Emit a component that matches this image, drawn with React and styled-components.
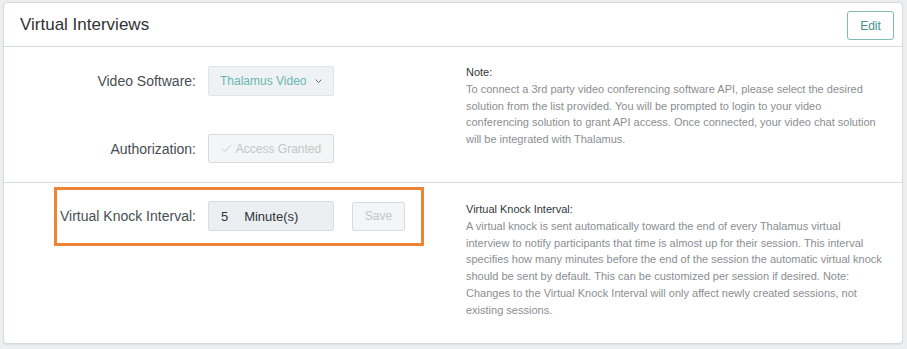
import React from "react";
import styled, { createGlobalStyle } from "styled-components";

const Global = createGlobalStyle`
  html, body { margin: 0; padding: 0; background: #eceef0; }
  body { font-family: "Liberation Sans", Arial, sans-serif; }
  * { box-sizing: border-box; }
`;

const Page = styled.div`
  padding: 2px 4px 5px 3px;
`;

const Card = styled.section`
  background: #fff;
  border: 1px solid #d6d9dc;
  border-radius: 4px;
  height: 342px;
  box-shadow: 0 1px 1px rgba(0,0,0,0.06);
  overflow: hidden;
`;

const Header = styled.header`
  height: 44px;
  display: flex;
  align-items: center;
  justify-content: space-between;
  padding: 0 8px 0 16px;
  border-bottom: 1px solid #d9dcdf;
`;

const Title = styled.h2`
  margin: 0;
  font-size: 17px;
  font-weight: 400;
  color: #2f3336;
`;

const EditButton = styled.button`
  width: 47px;
  height: 29px;
  margin-top: 2px;
  background: #fff;
  border: 1px solid #7fbab4;
  border-radius: 3px;
  color: #3f948c;
  font-family: inherit;
  font-size: 12px;
  font-weight: 400;
`;

const Section = styled.div`
  display: grid;
  grid-template-columns: 462px 1fr;
  height: ${p => p.$h}px;
  border-bottom: ${p => (p.$divider ? "1px solid #dadde0" : "none")};
`;

const LeftCol = styled.div`
  display: flex;
  flex-direction: column;
  padding-top: ${p => p.$pt}px;
  gap: ${p => p.$gap || 0}px;
`;

const FieldRow = styled.div`
  display: flex;
  align-items: center;
  gap: 12px;
`;

const Label = styled.label`
  width: ${p => (p.$w ? p.$w + "px" : "auto")};
  text-align: right;
  font-size: 14px;
  color: #4a4e52;
`;

const SelectBox = styled.div`
  width: 126px;
  height: 30px;
  display: flex;
  align-items: center;
  justify-content: space-between;
  padding: 0 10px 0 11px;
  background: #eef2f5;
  border: 1px solid #dfe4e8;
  border-radius: 2px;
  color: #6bb7b0;
  font-size: 12px;
`;

const GhostButton = styled.button`
  width: ${p => p.$w}px;
  height: 29px;
  display: flex;
  align-items: center;
  justify-content: center;
  gap: 4px;
  background: #f4f5f6;
  border: 1px solid #d9dcdf;
  border-radius: 2px;
  color: #c3c6c9;
  font-family: inherit;
  font-size: 12px;
`;

const Highlight = styled.div`
  display: inline-flex;
  align-items: center;
  align-self: flex-start;
  margin-left: 50px;
  border: 3px solid #ee8435;
  padding: 11px 16px 12px 3px;
  gap: 12px;
`;

const NumberInput = styled.div`
  width: 126px;
  height: 30px;
  display: flex;
  align-items: center;
  gap: 16px;
  padding: 0 12px;
  background: #eceff2;
  border: 1px solid #d8dde1;
  border-radius: 2px;
  color: #2e3235;
  font-size: 13px;
`;

const SaveSpacer = styled.div`
  margin-left: 6px;
`;

const Info = styled.div`
  padding-top: ${p => p.$pt}px;
  padding-right: 18px;
  font-size: 11px;
  line-height: 16.8px;
  color: #8b8e91;
`;

const InfoTitle = styled.div`
  color: #33373a;
  font-weight: 400;
`;

const Chevron = () => (
  <svg width="9" height="6" viewBox="0 0 9 6" fill="none">
    <path d="M1.5 1.5 L4.5 4.5 L7.5 1.5" stroke="#6a6e72" strokeWidth="1" />
  </svg>
);

const Check = () => (
  <svg width="11" height="9" viewBox="0 0 11 9" fill="none">
    <path d="M1 4.5 L4 7.5 L10 1" stroke="#c6c9cc" strokeWidth="1" />
  </svg>
);

export default function App() {
  return (
    <>
      <Global />
      <Page>
        <Card>
          <Header>
            <Title>Virtual Interviews</Title>
            <EditButton>Edit</EditButton>
          </Header>
          <Section $h={136} $divider>
            <LeftCol $pt={19} $gap={38}>
              <FieldRow>
                <Label $w={192}>Video Software:</Label>
                <SelectBox>
                  <span>Thalamus Video</span>
                  <Chevron />
                </SelectBox>
              </FieldRow>
              <FieldRow>
                <Label $w={192}>Authorization:</Label>
                <GhostButton $w={126}>
                  <Check />
                  Access Granted
                </GhostButton>
              </FieldRow>
            </LeftCol>
            <Info $pt={17}>
              <InfoTitle>Note:</InfoTitle>
              To connect a 3rd party video conferencing software API, please select the desired
              solution from the list provided. You will be prompted to login to your video
              conferencing solution to grant API access. Once connected, your video chat solution
              will be integrated with Thalamus.
            </Info>
          </Section>
          <Section $h={160}>
            <LeftCol $pt={4}>
              <Highlight>
                <Label>Virtual Knock Interval:</Label>
                <NumberInput>
                  <span>5</span>
                  <span>Minute(s)</span>
                </NumberInput>
                <SaveSpacer>
                  <GhostButton $w={53}>Save</GhostButton>
                </SaveSpacer>
              </Highlight>
            </LeftCol>
            <Info $pt={18}>
              <InfoTitle>Virtual Knock Interval:</InfoTitle>
              A virtual knock is sent automatically toward the end of every Thalamus virtual
              interview to notify participants that time is almost up for their session. This interval
              specifies how many minutes before the end of the session the automatic virtual knock
              should be sent by default. This can be customized per session if desired. Note:
              Changes to the Virtual Knock Interval will only affect newly created sessions, not
              existing sessions.
            </Info>
          </Section>
        </Card>
      </Page>
    </>
  );
}
